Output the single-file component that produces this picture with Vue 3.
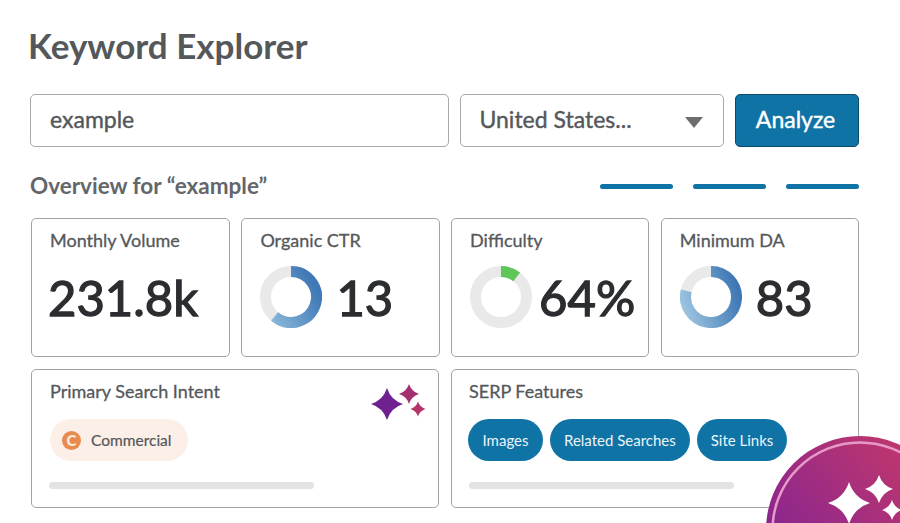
<script setup>
const stats = [
  { label: 'Monthly Volume', value: '231.8k' },
  { label: 'Organic CTR', value: '13', angle: 220, grad: 'blueA', gap: 14 },
  { label: 'Difficulty', value: '64%', angle: 38, color: '#5fc75a', gap: 7 },
  { label: 'Minimum DA', value: '83', angle: 284, grad: 'blueB', gap: 14 }
]
const serp = ['Images', 'Related Searches', 'Site Links']
const tabs = [1, 2, 3]

const arcPath = (deg) => {
  const r = 25.5
  const a = (deg - 90) * Math.PI / 180
  const x = 31 + r * Math.cos(a)
  const y = 31 + r * Math.sin(a)
  return `M 31 5.5 A ${r} ${r} 0 ${deg > 180 ? 1 : 0} 1 ${x} ${y}`
}
const sparklePath = (cx, cy, r) => {
  const k = r * 0.24
  return `M ${cx} ${cy - r} Q ${cx + k} ${cy - k} ${cx + r} ${cy} Q ${cx + k} ${cy + k} ${cx} ${cy + r} Q ${cx - k} ${cy + k} ${cx - r} ${cy} Q ${cx - k} ${cy - k} ${cx} ${cy - r} Z`
}
</script>

<template>
  <div class="page">
    <h1 class="title">Keyword Explorer</h1>

    <div class="search-row">
      <div class="field input">example</div>
      <div class="field select">
        <span>United States...</span>
        <span class="caret"></span>
      </div>
      <div class="analyze">Analyze</div>
    </div>

    <div class="overview-row">
      <span class="overview">Overview for “example”</span>
      <div class="tabs">
        <span v-for="t in tabs" :key="t" class="tab"></span>
      </div>
    </div>

    <div class="stats">
      <div v-for="s in stats" :key="s.label" class="card stat">
        <div class="card-label">{{ s.label }}</div>
        <div class="stat-body">
          <svg v-if="s.angle" class="donut" width="62" height="62" viewBox="0 0 62 62">
            <defs>
              <linearGradient id="blueA" gradientUnits="userSpaceOnUse" x1="8" y1="58" x2="60" y2="28">
                <stop offset="0" stop-color="#8fbcdc" />
                <stop offset="1" stop-color="#3f78b6" />
              </linearGradient>
              <linearGradient id="blueB" gradientUnits="userSpaceOnUse" x1="4" y1="46" x2="60" y2="28">
                <stop offset="0" stop-color="#9cc4e0" />
                <stop offset="1" stop-color="#3d76b4" />
              </linearGradient>
            </defs>
            <circle cx="31" cy="31" r="25.5" fill="none" stroke="#e9e9e9" stroke-width="11" />
            <path
              :d="arcPath(s.angle)"
              fill="none"
              :stroke="s.grad ? `url(#${s.grad})` : s.color"
              stroke-width="11"
            />
          </svg>
          <span
            class="stat-value"
            :style="{ marginLeft: s.angle ? s.gap + 'px' : '-2px' }"
          >{{ s.value }}</span>
        </div>
      </div>
    </div>

    <div class="panels">
      <div class="card panel">
        <div class="card-label">Primary Search Intent</div>
        <div class="intent">
          <span class="intent-icon">C</span>
          <span>Commercial</span>
        </div>
        <div class="skeleton"></div>
        <svg class="sparkles" width="60" height="44" viewBox="0 0 60 44">
          <path :d="sparklePath(16, 20, 16)" fill="#6f2190" />
          <path :d="sparklePath(38, 10, 10)" fill="#a5306f" />
          <path :d="sparklePath(47, 25, 7.5)" fill="#b5356a" />
        </svg>
      </div>

      <div class="card panel serp">
        <div class="card-label">SERP Features</div>
        <div class="chips">
          <span v-for="c in serp" :key="c" class="chip">{{ c }}</span>
        </div>
        <div class="skeleton"></div>
      </div>
    </div>

    <div class="fab">
      <svg width="188" height="188" viewBox="0 0 188 188">
        <defs>
          <linearGradient id="fabGrad" x1="0" y1="0.6" x2="0.7" y2="0">
            <stop offset="0" stop-color="#842492" />
            <stop offset="1" stop-color="#c0376d" />
          </linearGradient>
        </defs>
        <circle cx="94" cy="94" r="94" fill="url(#fabGrad)" />
        <circle cx="94" cy="94" r="87.5" fill="none" stroke="#e79ac8" stroke-width="2.5" />
        <path :d="sparklePath(83, 67, 21)" fill="#fff" />
        <path :d="sparklePath(113, 53, 14)" fill="#fff" />
        <path :d="sparklePath(126, 74, 10)" fill="#fff" />
      </svg>
    </div>
  </div>
</template>

<style scoped>
.page {
  position: relative;
  width: 900px;
  height: 523px;
  box-sizing: border-box;
  padding: 0 41px 0 30px;
  overflow: hidden;
  background: #fff;
  font-family: Lato, "Open Sans", sans-serif;
  color: #4f5154;
}

.title {
  margin: 0 0 0 -2px;
  padding-top: 25px;
  font-size: 35px;
  line-height: 41px;
  font-weight: 700;
  color: #55585b;
}

.search-row {
  display: flex;
  gap: 11px;
  margin-top: 28px;
  height: 53px;
}

.field {
  display: flex;
  align-items: center;
  box-sizing: border-box;
  border: 1px solid #a9a9a9;
  border-radius: 5px;
  padding: 0 19px 3px;
  font-size: 23px;
  color: #55585b;
  -webkit-text-stroke: 0.4px #55585b;
}

.input {
  width: 420px;
}

.select {
  width: 264px;
  padding-left: 18px;
  justify-content: space-between;
}

.caret {
  width: 0;
  height: 0;
  margin-top: 7px;
  margin-right: 1px;
  border-left: 9px solid transparent;
  border-right: 9px solid transparent;
  border-top: 11px solid #6e6e6e;
}

.analyze {
  display: flex;
  align-items: center;
  justify-content: center;
  box-sizing: border-box;
  width: 124px;
  padding: 0 3px 3px 0;
  border: 1px solid #0d4a68;
  border-radius: 5px;
  background: #0f73a5;
  color: #fff;
  font-size: 23px;
  -webkit-text-stroke: 0.4px #fff;
}

.overview-row {
  display: flex;
  justify-content: space-between;
  align-items: center;
  margin-top: 26px;
  height: 26px;
}

.overview {
  margin-top: -1px;
  font-size: 22.5px;
  font-weight: 700;
  color: #63666a;
}

.tabs {
  display: flex;
  gap: 20px;
}

.tab {
  width: 73px;
  height: 5px;
  border-radius: 3px;
  background: #0f73a5;
}

.stats {
  display: grid;
  grid-template-columns: 199px 198.3px 198.3px minmax(0, 1fr);
  gap: 11.4px;
  margin: 19px 0 0 1px;
}

.card {
  box-sizing: border-box;
  border: 1px solid #a3a3a3;
  border-radius: 5px;
  background: #fff;
}

.stat {
  height: 139px;
  padding: 10px 18px 0;
}

.card-label {
  font-size: 18px;
  line-height: 22px;
  color: #55585b;
  -webkit-text-stroke: 0.3px #55585b;
}

.stat-body {
  display: flex;
  align-items: center;
  height: 62px;
  margin-top: 15px;
}

.donut {
  flex: none;
}

.stat-value {
  font-size: 49px;
  line-height: 62px;
  color: #2b2d30;
  white-space: nowrap;
  -webkit-text-stroke: 1.3px #2b2d30;
}

.panels {
  display: grid;
  grid-template-columns: 408px 408px;
  gap: 12px;
  margin: 12px 0 0 1px;
}

.panel {
  position: relative;
  height: 139px;
  padding: 10px 18px 0;
}

.serp {
  padding-left: 17px;
}

.intent {
  display: inline-flex;
  align-items: center;
  gap: 10px;
  height: 42px;
  margin-top: 17px;
  padding: 0 17px 0 12px;
  border-radius: 21px;
  background: #fcefe7;
  font-size: 15.5px;
  color: #55585b;
  -webkit-text-stroke: 0.2px #55585b;
}

.intent-icon {
  display: flex;
  align-items: center;
  justify-content: center;
  width: 19px;
  height: 19px;
  border-radius: 50%;
  background: #e78b50;
  color: #fde9dc;
  font-size: 15px;
  font-weight: 900;
  -webkit-text-stroke: 0;
}

.chips {
  display: flex;
  gap: 7px;
  margin: 17px 0 0 -1px;
}

.chip {
  display: flex;
  align-items: center;
  height: 42px;
  padding: 0 14px;
  border-radius: 21px;
  background: #0f73a5;
  color: #eaf4fa;
  font-size: 15px;
}

.chip:first-child {
  padding: 0 14.5px;
}

.skeleton {
  position: absolute;
  left: 17px;
  bottom: 18px;
  width: 265px;
  height: 7px;
  border-radius: 4px;
  background: #e3e3e3;
}

.sparkles {
  position: absolute;
  top: 14px;
  right: 7px;
}

.fab {
  position: absolute;
  left: 766px;
  top: 436px;
  width: 188px;
  height: 188px;
}
</style>

<style>
html, body {
  margin: 0;
  overflow: hidden;
  background: #fff;
}
</style>
